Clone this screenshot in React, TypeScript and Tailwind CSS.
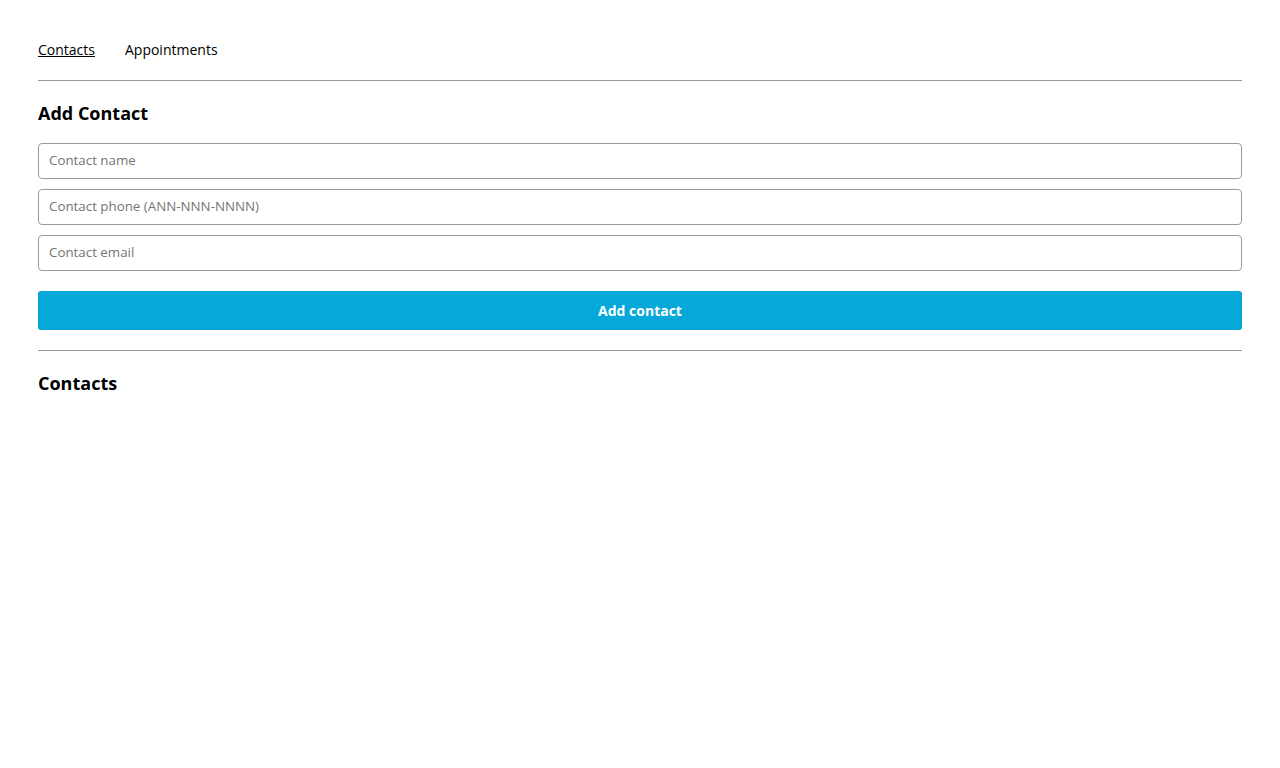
import { useState } from "react";

export default function App() {
  const [name, setName] = useState("");
  const [phone, setPhone] = useState("");
  const [email, setEmail] = useState("");

  return (
    <div
      className="min-h-screen w-full bg-white px-[38px] pt-[40px] text-black"
      style={{ fontFamily: '"Open Sans", "Noto Sans", sans-serif' }}
    >
      {/* Nav */}
      <nav className="flex items-center gap-[30px] text-[14px] leading-[20px]">
        <a href="#" className="underline">
          Contacts
        </a>
        <a href="#">Appointments</a>
      </nav>

      <hr className="mt-[20px] border-0 border-t border-[#999999]" />

      {/* Add contact form */}
      <h2 className="mt-[19px] text-[18px] font-bold leading-[26px]">Add Contact</h2>

      <form
        className="mt-[17px] flex flex-col"
        onSubmit={(e) => e.preventDefault()}
      >
        <div className="flex flex-col gap-[10px]">
          <input
            value={name}
            onChange={(e) => setName(e.target.value)}
            placeholder="Contact name"
            className="h-[36px] w-full rounded-[4px] border border-[#9a9a9a] px-[10px] pb-[2px] text-[13.333px] outline-none placeholder:text-[#757575]"
          />
          <input
            value={phone}
            onChange={(e) => setPhone(e.target.value)}
            placeholder="Contact phone (ANN-NNN-NNNN)"
            className="h-[36px] w-full rounded-[4px] border border-[#9a9a9a] px-[10px] pb-[2px] text-[13.333px] outline-none placeholder:text-[#757575]"
          />
          <input
            value={email}
            onChange={(e) => setEmail(e.target.value)}
            placeholder="Contact email"
            className="h-[36px] w-full rounded-[4px] border border-[#9a9a9a] px-[10px] pb-[2px] text-[13.333px] outline-none placeholder:text-[#757575]"
          />
        </div>
        <button
          type="submit"
          className="mt-[20px] h-[39px] w-full rounded-[3px] bg-[#05a8d8] text-[14px] font-bold text-white"
        >
          Add contact
        </button>
      </form>

      <hr className="mt-[20px] border-0 border-t border-[#999999]" />

      {/* Contacts list */}
      <h2 className="mt-[19px] text-[18px] font-bold leading-[26px]">Contacts</h2>
    </div>
  );
}
